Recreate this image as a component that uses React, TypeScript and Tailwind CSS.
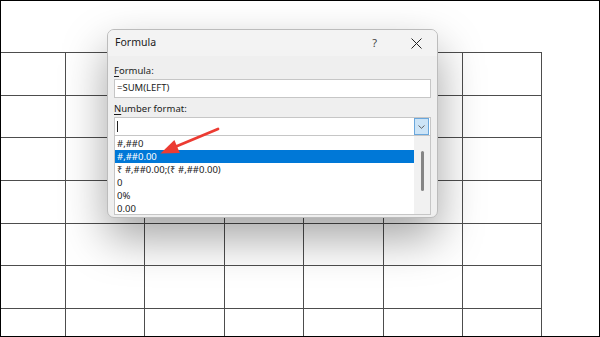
import React from "react"

const rows = Array.from({ length: 7 })
const cols = Array.from({ length: 7 })

const formats = [
  "#,##0",
  "#,##0.00",
  "₹ #,##0.00;(₹ #,##0.00)",
  "0",
  "0%",
  "0.00",
]

function DocTable() {
  return (
    <div className="mt-[51px] grid w-[541px] grid-cols-[65px_repeat(6,79.4px)] auto-rows-[42.67px] border-t border-[#4d4d4d]">
      {rows.map((_, r) =>
        cols.map((_, c) => (
          <div key={`${r}-${c}`} className="border-r border-b border-[#4d4d4d]" />
        ))
      )}
    </div>
  )
}

function FormulaDialog() {
  return (
    <div className="absolute left-[106px] top-[28px] flex h-[189px] w-[331px] flex-col overflow-hidden rounded-[7px] border border-[#bcbcbc] bg-[#efefef] text-[9.5px] text-[#1b1b1b] shadow-[0_20px_45px_rgba(0,0,0,0.36)] [font-family:'Noto_Sans',sans-serif]">
      {/* title bar */}
      <div className="flex h-[26px] shrink-0 items-center bg-[#f3f3f3] pl-[7px]">
        <span className="text-[10.5px]">Formula</span>
        <span className="ml-auto mr-[34px] text-[11px] text-[#444]">?</span>
        <svg width="11" height="11" viewBox="0 0 11 11" className="mr-[15px]">
          <path d="M0.5 0.5 L10.5 10.5 M10.5 0.5 L0.5 10.5" stroke="#222" strokeWidth="1" fill="none" />
        </svg>
      </div>

      <div className="flex flex-col px-[6px]">
        <div className="mt-[8px] h-[13px] leading-[13px]">
          <span className="underline underline-offset-2">F</span>ormula:
        </div>
        <div className="mt-[2px] flex h-[19px] items-center border border-[#c6c6c6] bg-white pl-[2px]">
          =SUM(LEFT)
        </div>
        <div className="mt-[4px] h-[13px] leading-[13px]">
          <span className="underline underline-offset-2">N</span>umber format:
        </div>

        {/* combo box */}
        <div className="mt-[2px] flex h-[19px] items-center border border-[#c6c6c6] bg-white">
          <div className="ml-[2px] h-[11px] w-px bg-[#222]" />
          <div className="ml-auto mr-px flex h-[17px] w-[15px] items-center justify-center border border-[#6aa7dc] bg-[#cce4f7]">
            <svg width="7" height="4" viewBox="0 0 7 4">
              <path d="M0.5 0.5 L3.5 3.3 L6.5 0.5" stroke="#555" strokeWidth="0.9" fill="none" />
            </svg>
          </div>
        </div>

        {/* list */}
        <div className="flex h-[79px] overflow-hidden border-x border-b border-[#c6c6c6] bg-white">
          <div className="flex flex-1 flex-col pt-[1px]">
            {formats.map((f, i) => (
              <div
                key={f}
                className={
                  i === 1
                    ? "h-[13px] shrink-0 bg-[#0078d7] pl-[2px] leading-[13px] text-white"
                    : "h-[13px] shrink-0 pl-[2px] leading-[13px]"
                }
              >
                {f}
              </div>
            ))}
          </div>
          <div className="flex w-[16px] shrink-0 justify-center bg-[#f1f1f1] pt-[15px]">
            <div className="h-[40px] w-[3px] rounded-full bg-[#868686]" />
          </div>
        </div>
      </div>
    </div>
  )
}

export default function App() {
  return (
    <div className="relative h-[337px] w-[600px] overflow-hidden border border-black bg-white">
      <DocTable />
      <FormulaDialog />
      {/* red annotation arrow */}
      <svg
        className="pointer-events-none absolute left-[-1px] top-[-1px]"
        width="600"
        height="337"
        viewBox="0 0 600 337"
      >
        <line x1="218" y1="129" x2="176" y2="146.5" stroke="#ec3b32" strokeWidth="2.8" strokeLinecap="round" />
        <polygon points="160.5,153.5 174.4,140.1 179.8,152.9" fill="#ec3b32" />
      </svg>
    </div>
  )
}
